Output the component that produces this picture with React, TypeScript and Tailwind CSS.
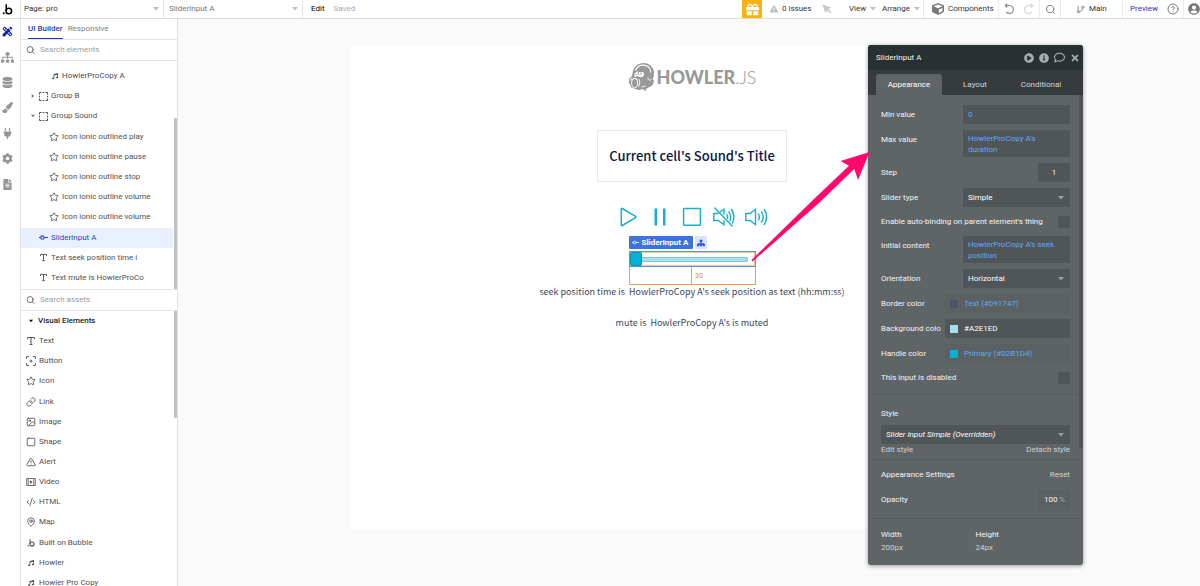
import React from 'react';
import clsx from 'clsx';
import {
  FaSitemap,
  FaDatabase,
  FaPaintBrush,
  FaPlug,
  FaCog,
  FaFileAlt,
  FaGift,
  FaExclamationTriangle,
  FaCube,
  FaPlayCircle,
  FaInfoCircle,
  FaRegComment,
  FaTimes,
  FaUserCircle,
  FaMusic,
} from 'react-icons/fa';
import { MdDesignServices } from 'react-icons/md';
import {
  Search,
  Star,
  Link,
  Image,
  Square,
  TriangleAlert,
  CodeXml,
  MapPin,
  GitBranch,
  CircleHelp,
} from 'lucide-react';

const Caret = ({ className = '' }: { className?: string }) => (
  <svg viewBox="0 0 6 4" className={clsx('h-1 w-1.5 shrink-0 fill-current', className)}>
    <path d="M0 0h6L3 3.6z" />
  </svg>
);

const BubbleLogo = ({ className = '' }: { className?: string }) => (
  <svg viewBox="0 0 20 22" className={className} fill="none">
    <circle cx="2.4" cy="18.6" r="2" fill="currentColor" />
    <path d="M7.5 0.5v13.500" stroke="currentColor" strokeWidth="3" />
    <circle cx="12.6" cy="14" r="5.6" stroke="currentColor" strokeWidth="3" />
  </svg>
);

const GroupIcon = ({ className = '' }: { className?: string }) => (
  <svg viewBox="0 0 9 9" className={className} fill="none" stroke="currentColor" strokeWidth="1">
    <path d="M.5 2.5v-2h2M6.5.5h2v2M8.5 6.5v2h-2M2.5 8.5h-2v-2M3.7.5h1.6M3.7 8.5h1.6M.5 3.7v1.6M8.5 3.7v1.6" />
  </svg>
);

const ButtonIcon = ({ className = '' }: { className?: string }) => (
  <svg viewBox="0 0 9 9" className={className} fill="none" stroke="currentColor" strokeWidth="0.8">
    <path d="M.5 2.7V.5h2.2M6.3.5h2.2v2.2M8.5 6.3v2.2H6.3M2.7 8.5H.5V6.3M4.5 3.2v2.6M3.2 4.5h2.6" />
  </svg>
);

const SliderIcon = ({ className = '' }: { className?: string }) => (
  <svg viewBox="0 0 8 8" className={className} fill="none" stroke="currentColor" strokeWidth="1">
    <path d="M0 4h1.4M4.6 4H8" />
    <circle cx="3" cy="4" r="1.5" />
  </svg>
);

const TextIcon = ({ className = '' }: { className?: string }) => (
  <svg viewBox="0 0 9 9" className={className} fill="none" stroke="currentColor" strokeWidth="0.9">
    <path d="M1.5 3V1.4h6V3M4.5 1.4v6.2M3.200 7.6h2.600" />
  </svg>
);

const VideoIcon = ({ className = '' }: { className?: string }) => (
  <svg viewBox="0 0 10 10" className={className} fill="none" stroke="currentColor" strokeWidth="0.8">
    <path d="M.7 1.500h8.600v7H.7zM2.200 1.500v7M7.800 1.500v7" />
    <path d="M4.200 3.500v3L6.400 5z" fill="currentColor" strokeWidth="0.4" />
  </svg>
);

const PointerIcon = ({ className = '' }: { className?: string }) => (
  <svg viewBox="0 0 10 10" className={className} fill="currentColor">
    <path d="M.4.4 9.300 3.400 6.300 5 9.600 8.300 8.300 9.600 5 6.300 3.400 9.300z" />
  </svg>
);

const TreeIcon = ({ className = '' }: { className?: string }) => (
  <svg viewBox="0 0 8 8" className={className} fill="currentColor">
    <path d="M2.700.7h2.600v2.500H4.300v1h2.900v1H8v2H5.800v-1.500H5v1.500H3v-1.500h-.8v1.500H0v-2h.8v-1h2.900v-1h-1z" />
  </svg>
);

const UndoIcon = ({ className = '' }: { className?: string }) => (
  <svg viewBox="0 0 12 12" className={className} fill="none" stroke="currentColor" strokeWidth="1.200">
    <path d="M2.500 2.500h4.200a4 4 0 1 1-3.500 6.300M4.300.6 2.300 2.500l2 2" />
  </svg>
);

type IconType = React.ComponentType<{ className?: string }>;

const MusicIcon = FaMusic as IconType;

const railItems: { label: string; icon: IconType }[] = [
  { label: 'Design', icon: MdDesignServices as IconType },
  { label: 'Workflow', icon: FaSitemap as IconType },
  { label: 'Data', icon: FaDatabase as IconType },
  { label: 'Styles', icon: FaPaintBrush as IconType },
  { label: 'Plugins', icon: FaPlug as IconType },
  { label: 'Settings', icon: FaCog as IconType },
  { label: 'Logs', icon: FaFileAlt as IconType },
];

const treeItems: { label: string; icon: IconType; level: number; open?: boolean; active?: boolean }[] = [
  { label: 'HowlerProCopy A', icon: MusicIcon, level: 2 },
  { label: 'Group B', icon: GroupIcon, level: 1, open: false },
  { label: 'Group Sound', icon: GroupIcon, level: 1, open: true },
  { label: 'Icon ionic outlined play', icon: Star, level: 2 },
  { label: 'Icon ionic outline pause', icon: Star, level: 2 },
  { label: 'Icon ionic outline stop', icon: Star, level: 2 },
  { label: 'Icon ionic outline volume', icon: Star, level: 2 },
  { label: 'Icon ionic outline volume', icon: Star, level: 2 },
  { label: 'SliderInput A', icon: SliderIcon, level: 1, active: true },
  { label: 'Text seek position time i', icon: TextIcon, level: 1 },
  { label: 'Text mute is HowlerProCo', icon: TextIcon, level: 1 },
];

const assets: { label: string; icon: IconType }[] = [
  { label: 'Text', icon: TextIcon },
  { label: 'Button', icon: ButtonIcon },
  { label: 'Icon', icon: Star },
  { label: 'Link', icon: Link },
  { label: 'Image', icon: Image },
  { label: 'Shape', icon: Square },
  { label: 'Alert', icon: TriangleAlert },
  { label: 'Video', icon: VideoIcon },
  { label: 'HTML', icon: CodeXml },
  { label: 'Map', icon: MapPin },
  { label: 'Built on Bubble', icon: BubbleLogo },
  { label: 'Howler', icon: MusicIcon },
  { label: 'Howler Pro Copy', icon: MusicIcon },
];

const TopBar = () => (
  <header className="flex h-[19px] shrink-0 items-stretch border-b border-[#dcdcdc] bg-white text-[#333]">
    <div className="flex w-[21px] items-center border-r border-[#e4e4e4] pl-[2px] text-black">
      <BubbleLogo className="h-[11px] w-[11px]" />
    </div>
    <button className="flex w-[143px] items-center justify-between border-r border-[#e4e4e4] pr-1 pl-[3px]">
      Page: pro
      <Caret className="text-[#b5bcc2]" />
    </button>
    <button className="flex w-[139px] items-center justify-between border-r border-[#e4e4e4] pr-1 pl-[5px] text-[#6b7785]">
      SliderInput A
      <Caret className="text-[#b5bcc2]" />
    </button>
    <button className="pl-2 text-black">Edit</button>
    <span className="flex items-center pl-[9px] text-[#a9a9a9]">Saved</span>

    <div className="ml-auto flex items-stretch">
      <button aria-label="Gifts" className="flex w-5 items-center justify-center bg-[#fbb216] text-white">
        <FaGift className="h-[13px] w-[13px]" />
      </button>
      <button className="flex w-12 items-center gap-1 pl-2 whitespace-nowrap">
        <FaExclamationTriangle className="h-2 w-2 shrink-0 text-[#bdbdbd]" />0 issues
      </button>
      <button aria-label="Pointer" className="flex w-[39px] items-center pl-3 text-[#c8c8c8]">
        <PointerIcon className="h-[10px] w-[10px]" />
      </button>
      <button className="flex w-[33px] items-center gap-1">
        View <Caret className="text-[#b9c3cc]" />
      </button>
      <button className="flex w-[42px] items-center gap-1 border-r border-[#ececec]">
        Arrange <Caret className="text-[#b9c3cc]" />
      </button>
      <button className="flex w-[75px] items-center gap-1 border-r border-[#ececec] pl-2">
        <FaCube className="h-3 w-3 text-[#777]" />
        Components
      </button>
      <button aria-label="Undo" className="flex w-5 items-center justify-center text-[#8a8a8a]">
        <UndoIcon className="h-3 w-3" />
      </button>
      <button aria-label="Redo" className="flex w-[21px] items-center justify-center border-r border-[#ececec] text-[#d3d3d3]">
        <UndoIcon className="h-3 w-3 -scale-x-100" />
      </button>
      <button aria-label="Search" className="flex w-[21px] items-center justify-center border-r border-[#ececec] text-[#777]">
        <Search className="h-[11px] w-[11px]" />
      </button>
      <button className="flex w-[62px] items-center gap-1 border-r border-[#ececec] pl-[15px]">
        <GitBranch className="h-[9px] w-[9px] text-[#777]" />
        Main
      </button>
      <a href="#preview" className="flex w-10 items-center pl-[7px] text-[#1f2fd0]">
        Preview
      </a>
      <button aria-label="Help" className="flex w-[21px] items-center justify-center border-r border-[#ececec] text-[#777]">
        <CircleHelp className="h-3 w-3" />
      </button>
      <button aria-label="Account" className="flex w-4 items-center justify-end overflow-hidden text-[#777]">
        <FaUserCircle className="h-3 w-3" />
      </button>
    </div>
  </header>
);

const Rail = () => (
  <nav className="w-[21px] shrink-0 border-r border-[#e4e4e4] bg-white">
    <div className="flex h-[178px] flex-col">
      {railItems.map(({ label, icon: RailIcon }, i) => (
        <button
          key={label}
          aria-label={label}
          className={clsx('flex w-full flex-1 items-center justify-center pr-[5px]', i === 0 ? 'text-[#1327a5]' : 'text-[#959595]')}
        >
          <RailIcon className={i < 2 ? 'h-[13px] w-[13px]' : 'h-[11px] w-[11px]'} />
        </button>
      ))}
    </div>
  </nav>
);

const SearchBox = ({ placeholder }: { placeholder: string }) => (
  <label className="flex h-[21px] shrink-0 items-center gap-[5px] border-b border-[#e4e4e4] pl-[5px]">
    <Search className="h-[10px] w-[10px] text-[#444]" />
    <input
      type="search"
      aria-label={placeholder}
      placeholder={placeholder}
      className="w-full outline-none placeholder:text-[#9b9b9b]"
    />
  </label>
);

const SidePanel = () => (
  <aside className="flex w-[157px] shrink-0 flex-col overflow-hidden border-r border-[#e0e0e0] bg-white text-[#4f4f4f]">
    <div className="flex h-[21px] shrink-0 items-stretch gap-[5px] border-b border-[#e4e4e4] pl-[7px]">
      <button className="border-b border-[#1c3ab8] font-medium text-[#1c3ab8]">UI Builder</button>
      <button className="text-[#7f7f7f]">Responsive</button>
    </div>
    <SearchBox placeholder="Search elements" />
    <div className="relative shrink-0 border-b border-[#e4e4e4]">
      <ul className="flex h-[228px] flex-col pt-[5px] pr-1 pb-px">
        {treeItems.map(({ label, icon: ItemIcon, level, open, active }, i) => (
          <li key={i} className={clsx('flex-1', active && 'bg-[#e8f0fe] text-[#2c44c4]')}>
            <button className={clsx('flex h-full w-full items-center gap-[3px] whitespace-nowrap', level === 2 ? 'pl-7' : 'pl-2')}>
              {level === 1 && (
                <span className="flex w-[7px] justify-center">
                  {open !== undefined && (
                    <Caret className={clsx('scale-75 text-[#777]', !open && '-rotate-90')} />
                  )}
                </span>
              )}
              <ItemIcon
                className={clsx(
                  'shrink-0',
                  ItemIcon === MusicIcon ? 'mr-px ml-[3px] h-[6px] w-[6px]' : level === 2 ? 'h-[10px] w-[10px]' : 'h-[9px] w-[9px]',
                )}
              />
              {label}
            </button>
          </li>
        ))}
      </ul>
      <div className="absolute right-0 bottom-0 h-[171px] w-[3px] bg-[#c1c1c1]" />
    </div>
    <SearchBox placeholder="Search assets" />
    <div className="relative shrink-0">
      <ul className="flex h-[282px] flex-col">
        <li className="flex-1">
          <button className="flex h-full items-center gap-1 pl-[7px] font-medium text-[#222]">
            <Caret className="scale-75 text-black" />
            Visual Elements
          </button>
        </li>
        {assets.map(({ label, icon: AssetIcon }) => (
          <li key={label} className="flex-1">
            <button className="flex h-full items-center gap-[3px] pl-[5px]">
              <span className="flex w-[10px] justify-center">
                <AssetIcon
                  className={AssetIcon === MusicIcon ? 'h-[6px] w-[6px]' : AssetIcon === BubbleLogo ? 'h-2 w-2' : 'h-[10px] w-[10px]'}
                />
              </span>
              {label}
            </button>
          </li>
        ))}
      </ul>
      <div className="absolute top-0 right-0 h-[107px] w-[3px] bg-[#c1c1c1]" />
    </div>
  </aside>
);

const HowlerLogo = () => (
  <div className="flex h-[30px] items-center gap-[2px] text-[#999]">
    <svg viewBox="0 0 27 30" className="h-[30px] w-[27px]">
      <path
        d="M4.500 11C5.500 5 10 1 15.500 1 21.500 1 26 5.500 26 11c0 2.500-.3 4-1.200 6l1.200 2-1.500 4.500-4.500 2.200-2 1.300v2.300l-3.200-2.300-4 1-3.500-1-4-1.500L.8 20l.6-4 2.600-2z"
        fill="currentColor"
      />
      <path d="M7.500 8.500C9 5 11.500 3.200 15 3.200c4.800 0 7.600 3.200 7.800 7.300" fill="none" stroke="#fff" strokeWidth="1.300" />
      <path d="M6.500 11.500l3-2 3 1 2.500-.7 1.200 2.500-1 2.200-3 .8-2.700-1.300-2.700 1z" fill="#fff" />
      <path d="M7.500 12l2 .6M12 12.200l2-.5M10 10l1 3" stroke="currentColor" strokeWidth="0.900" />
      <ellipse cx="6.600" cy="21" rx="3.500" ry="5.200" fill="#fff" />
      <ellipse cx="6.600" cy="21.300" rx="2.500" ry="4.200" fill="currentColor" />
      <path d="M11 17c1.200 3 .8 5-.5 8M1.500 15.500l2 1-1 2M20 15.500c-.5 3 2.500 3.500 3.500 1.500M13.500 25l4-1" fill="none" stroke="#fff" strokeWidth="0.900" />
    </svg>
    <span className="font-['Lato'] text-[18px] leading-none font-black">
      HOWLER<span className="font-light">.JS</span>
    </span>
  </div>
);

const MediaControls = () => (
  <div className="flex gap-[10px] text-[#14b1cf]">
    <button aria-label="Play">
      <svg viewBox="0 0 22 22" className="h-[22px] w-[22px]" fill="none" stroke="currentColor" strokeWidth="1.500">
        <path d="M4.300 3v16c0 .6.500.8 1 .5l13.300-7.900c.5-.3.500-.9 0-1.200L5.300 2.500c-.5-.3-1-.1-1 .5z" />
      </svg>
    </button>
    <button aria-label="Pause">
      <svg viewBox="0 0 22 22" className="h-[22px] w-[22px]" fill="currentColor">
        <path d="M5.500 2.500H8v17H5.500zM14 2.500h2.500v17H14z" />
      </svg>
    </button>
    <button aria-label="Stop">
      <svg viewBox="0 0 22 22" className="h-[22px] w-[22px]" fill="none" stroke="currentColor" strokeWidth="1.500">
        <rect x="2.600" y="2.500" width="16.800" height="16.800" rx="0.800" />
      </svg>
    </button>
    <button aria-label="Mute">
      <svg viewBox="0 0 22 22" className="h-[22px] w-[22px]" fill="none" stroke="currentColor" strokeWidth="1.400" strokeLinecap="round">
        <path d="M5 7.500H.8v7H5l6 4.200v-4M7.500 5.800l3.500-2.500v5M1.800 2l17.400 18M14 8.500c.6 1.200.7 2.500.5 4M16 5.800c1.800 3 2 6 1 9M18.500 3.500c3 4.500 3 9 1 13.500" />
      </svg>
    </button>
    <button aria-label="Volume">
      <svg viewBox="0 0 22 22" className="h-[22px] w-[22px]" fill="none" stroke="currentColor" strokeWidth="1.400" strokeLinecap="round">
        <path d="M.8 7.500H5l5.500-4.200v15.400L5 14.500H.8zM13.500 8c1.200 2 1.200 4 0 6M16.500 5.800c2.200 3.400 2.200 7 0 10.400M19.200 3.500c3.200 5 3.200 10 0 15" />
      </svg>
    </button>
  </div>
);

const SliderElement = () => (
  <div className="w-[127px]">
    <div className="flex h-[13px] gap-[2px]">
      <span className="flex w-16 items-center gap-[3px] rounded-[1px] bg-[#3c74dc] pl-[3px] font-bold whitespace-nowrap text-white">
        <SliderIcon className="h-[7px] w-[7px]" />
        SliderInput A
      </span>
      <button aria-label="Element tree" className="flex w-3 items-center justify-center bg-[#d9e3f9] text-[#2b4be0]">
        <TreeIcon className="h-2 w-2" />
      </button>
    </div>
    <div className="mt-[2px] flex h-4 items-center border border-[#4a9fd8] shadow-[inset_0_0_0_1px_#f6c48e]">
      <input
        type="range"
        aria-label="Seek position"
        min={0}
        max={100}
        defaultValue={0}
        className="h-[14px] w-[118px] appearance-none bg-transparent [&::-webkit-slider-runnable-track]:h-[5px] [&::-webkit-slider-runnable-track]:rounded-full [&::-webkit-slider-runnable-track]:bg-[#a2e1ed] [&::-webkit-slider-runnable-track]:shadow-[inset_0_0_0_1px_#86c3d0] [&::-webkit-slider-thumb]:-mt-[5px] [&::-webkit-slider-thumb]:h-[14px] [&::-webkit-slider-thumb]:w-3 [&::-webkit-slider-thumb]:appearance-none [&::-webkit-slider-thumb]:rounded-[2px] [&::-webkit-slider-thumb]:border [&::-webkit-slider-thumb]:border-[#0795b3] [&::-webkit-slider-thumb]:bg-[#02b1d4]"
      />
    </div>
    <div className="flex h-[18px] border border-t-0 border-[#f0a04b]">
      <div className="w-1/2 border-r border-[#f0a04b]" />
      <span className="flex items-center pl-[3px] text-[7px] text-[#e88c2c]">30</span>
    </div>
  </div>
);

const Canvas = () => (
  <main className="relative min-w-0 flex-1 overflow-hidden bg-[#fafafa]">
    <div className="mt-[26px] mr-[167px] ml-[173px] flex h-[484px] flex-col items-center bg-white pt-[17px] font-['Noto_Sans_CJK_JP',sans-serif] text-[#3b4560]">
      <HowlerLogo />
      <h1 className="mt-[38px] flex h-[52px] w-[190px] items-center justify-center border border-[#e6e6ee] text-[13px] font-medium whitespace-nowrap text-[#091747]">
        Current cell's Sound's Title
      </h1>
      <div className="mt-6">
        <MediaControls />
      </div>
      <div className="mt-2 font-['Roboto']">
        <SliderElement />
      </div>
      <p className="text-[9px] leading-[13px] whitespace-nowrap">
        seek position time is &nbsp;HowlerProCopy A's seek position as text (hh:mm:ss)
      </p>
      <p className="mt-[18px] text-[9px] leading-[13px] whitespace-nowrap">mute is &nbsp;HowlerProCopy A's is muted</p>
    </div>
    <PropertyEditor />
    <svg viewBox="0 0 122 112" className="pointer-events-none absolute top-[132px] right-[328px] h-28 w-[122px]">
      <path
        d="M1.500 109 64.500 47.500 99 14.700 90.500 10 119.700 1 108 29 104.300 18 69 52 2.500 110.500z"
        fill="#ff0a6c"
      />
    </svg>
  </main>
);

interface FieldProps {
  label: string;
  id: string;
  children: React.ReactNode;
}

const Field = ({ label, id, children }: FieldProps) => (
  <div className="flex items-start justify-between">
    <label htmlFor={id} className="flex h-[19px] items-center whitespace-nowrap">
      {label}
    </label>
    {children}
  </div>
);

const Dropdown = ({ id, value, className }: { id: string; value: string; className?: string }) => (
  <div className={clsx('relative h-[19px]', className)}>
    <select id={id} defaultValue={value} className="h-full w-full appearance-none bg-[#505557] px-[5px] text-white [font-style:inherit]">
      <option>{value}</option>
    </select>
    <Caret className="pointer-events-none absolute top-2 right-[6px] text-[#9aa0a2]" />
  </div>
);

const Composer = ({ id, value }: { id: string; value: string }) => (
  <textarea
    id={id}
    defaultValue={value}
    className="h-[27px] w-[107px] resize-none overflow-hidden bg-[#505557] px-[5px] py-[3px] leading-[11px] text-[#62a8f8]"
  />
);

const Toggle = ({ id, label }: { id: string; label: string }) => (
  <div className="flex h-[17px] items-center justify-between">
    <label htmlFor={id} className="whitespace-nowrap">
      {label}
    </label>
    <input id={id} type="checkbox" className="h-3 w-3 appearance-none bg-[#505557]" />
  </div>
);

const ColorField = ({ id, label, value, color, muted }: { id: string; label: string; value: string; color: string; muted?: boolean }) => (
  <Field id={id} label={label}>
    <div className={clsx('flex h-[19px] w-[125px] items-center gap-[6px] pl-[5px]', muted ? 'bg-[#5b6163]' : 'bg-[#505557]')}>
      <span className="h-2 w-2" style={{ backgroundColor: color }} />
      <input id={id} defaultValue={value} className={clsx('w-24', muted ? 'text-[#62a8f8]' : 'text-white')} />
    </div>
  </Field>
);

const PropertyEditor = () => (
  <section className="absolute top-[26px] right-[117px] w-[215px] overflow-hidden rounded-[3px] bg-[#5f6567] text-[#f4f4f4] shadow-[0_1px_4px_rgba(0,0,0,0.4)]">
    <div className="flex h-[25px] items-center justify-between bg-[#283031] pr-[3px] pl-2">
      <h2>SliderInput A</h2>
      <div className="flex items-center gap-[5px] text-[#a7acae]">
        <button aria-label="Preview element">
          <FaPlayCircle className="h-[10px] w-[10px]" />
        </button>
        <button aria-label="Info">
          <FaInfoCircle className="h-[10px] w-[10px]" />
        </button>
        <button aria-label="Comment">
          <FaRegComment className="h-[11px] w-[11px]" />
        </button>
        <button aria-label="Close">
          <FaTimes className="h-[10px] w-[10px]" />
        </button>
      </div>
    </div>
    <div className="flex h-[25px] items-end bg-[#363c3e] pl-2 text-[#d2d4d5]">
      <button className="h-[21px] w-[66px] rounded-t-[3px] bg-[#5f6567] text-white">Appearance</button>
      <button className="h-[21px] w-[66px]">Layout</button>
      <button className="h-[21px] w-[66px]">Conditional</button>
    </div>
    <div className="relative">
      <div className="flex flex-col gap-[6px] px-[13px] pt-[10px] pb-2">
        <Field id="min" label="Min value">
          <input id="min" defaultValue="0" className="h-[19px] w-[107px] bg-[#505557] px-[5px] text-[#62a8f8]" />
        </Field>
        <Field id="max" label="Max value">
          <Composer id="max" value="HowlerProCopy A's duration" />
        </Field>
        <Field id="step" label="Step">
          <input id="step" defaultValue="1" className="h-[19px] w-8 bg-[#505557] text-center" />
        </Field>
        <Field id="type" label="Slider type">
          <Dropdown id="type" value="Simple" className="w-[107px]" />
        </Field>
        <Toggle id="binding" label="Enable auto-binding on parent element's thing" />
        <Field id="initial" label="Initial content">
          <Composer id="initial" value="HowlerProCopy A's seek position" />
        </Field>
        <Field id="orientation" label="Orientation">
          <Dropdown id="orientation" value="Horizontal" className="w-[107px]" />
        </Field>
        <ColorField id="border" label="Border color" value="Text (#091747)" color="#4d5264" muted />
        <ColorField id="background" label="Background colo" value="#A2E1ED" color="#a2e1ed" />
        <ColorField id="handle" label="Handle color" value="Primary (#02B1D4)" color="#02b1d4" muted />
        <Toggle id="disabled" label="This input is disabled" />
      </div>
      <div className="border-t border-[#575c5e] px-[13px] pt-3 pb-[3px]">
        <label htmlFor="style" className="flex h-[14px] items-center">
          Style
        </label>
        <Dropdown id="style" value="Slider Input Simple (Overridden)" className="mt-1 italic" />
        <div className="flex h-3 items-center justify-between text-[#cfd1d2]">
          <button>Edit style</button>
          <button>Detach style</button>
        </div>
      </div>
      <div className="border-t border-[#575c5e] px-[13px] pt-[9px] pb-[9px]">
        <div className="flex h-3 items-center justify-between">
          <h3>Appearance Settings</h3>
          <button className="text-[#cfd1d2]">Reset</button>
        </div>
        <div className="mt-[9px] flex h-[19px] items-center justify-between">
          <label htmlFor="opacity">Opacity</label>
          <div className="flex h-full w-8 items-center bg-[#5b6163] pl-[6px]">
            <input id="opacity" defaultValue="100" className="w-[15px]" />
            <span className="text-[#a9adaf]">%</span>
          </div>
        </div>
      </div>
      <dl className="grid grid-cols-2 border-t border-[#575c5e] px-[13px] pt-[9px] pb-[11px] leading-[13px]">
        <div>
          <dt>Width</dt>
          <dd className="text-[#cfd1d2]">200px</dd>
        </div>
        <div>
          <dt>Height</dt>
          <dd className="text-[#cfd1d2]">24px</dd>
        </div>
      </dl>
      <div className="absolute top-0 right-0 h-[353px] w-1 bg-[#4f5557]" />
    </div>
  </section>
);

const App: React.FC = () => {
  return (
    <div className="flex h-screen flex-col overflow-hidden font-['Roboto',sans-serif] text-[8px] leading-3">
      <TopBar />
      <div className="flex min-h-0 flex-1">
        <Rail />
        <SidePanel />
        <Canvas />
      </div>
    </div>
  );
};

export default App;
